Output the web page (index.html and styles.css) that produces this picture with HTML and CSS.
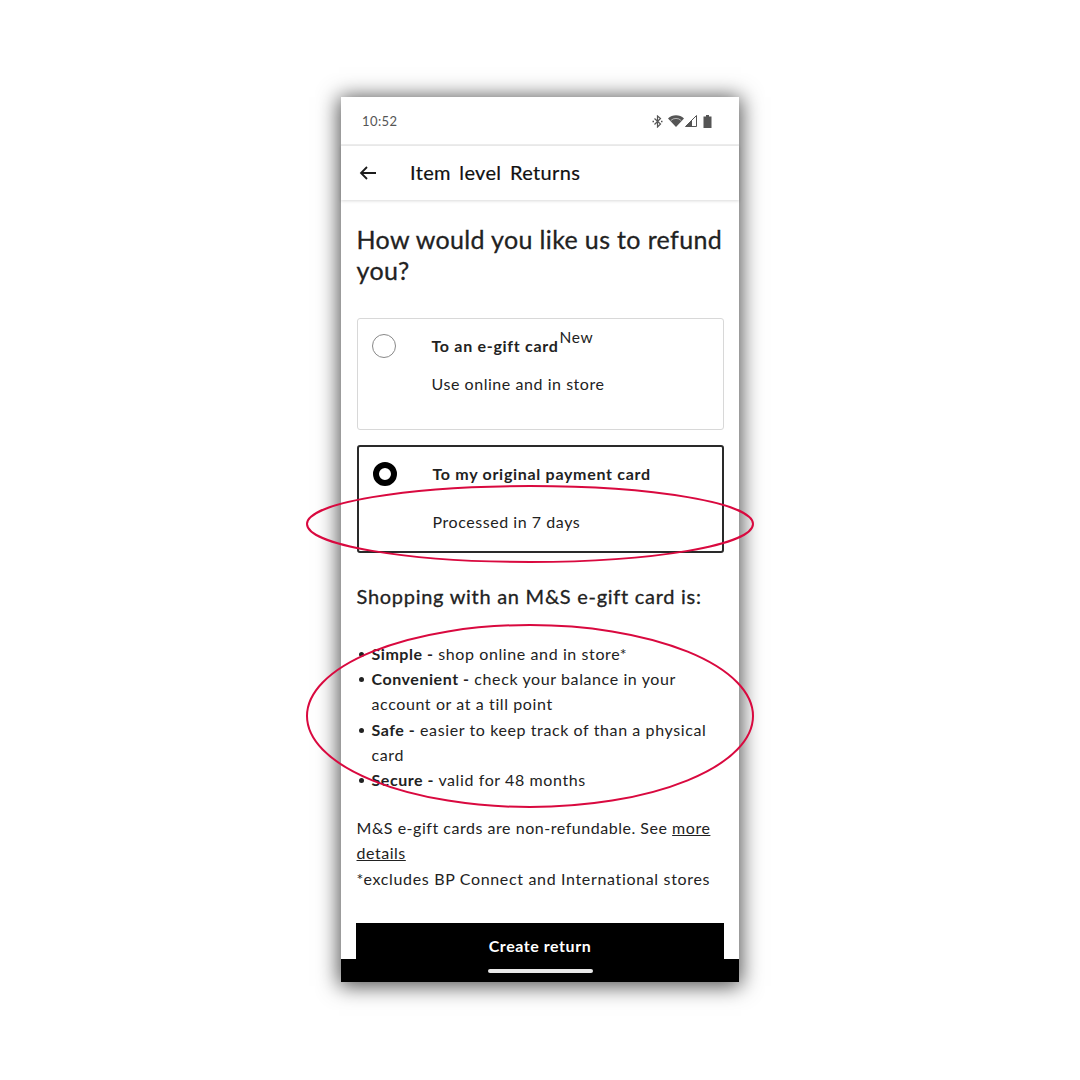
FILE: index.html
```html
<!DOCTYPE html>
<html lang="en">
<head>
    <meta charset="UTF-8">
    <title>Item level Returns</title>
    <link rel="stylesheet" href="styles.css">
</head>
<body>
    <div class="phone">
        <div class="status-bar">
            <span class="time">10:52</span>
            <div class="status-icons">
                <svg width="11" height="13" viewBox="0 0 11 13" fill="none" stroke="#555" stroke-width="1.2"><path d="M2.500 3.500l6 5.500-3 3V1l3 2.500-6 6"/><path d="M.5 6.500h1.500M9 6.500h1.500" stroke-width="1.500"/></svg>
                <svg class="wifi" width="16" height="12" viewBox="0 0 16 12"><path d="M0 3.500a11.500 11.500 0 0 1 16 0L8 12z" fill="#555"/><path d="M2.800 5.500a7.500 7.500 0 0 1 10.400 0" fill="none" stroke="#ddd" stroke-width=".7"/></svg>
                <svg width="12" height="12" viewBox="0 0 12 12"><path d="M11.500.5v11H.5z" fill="none" stroke="#555"/><path d="M7 5v6.500H.5z" fill="#555"/></svg>
                <svg class="battery" width="9" height="13" viewBox="0 0 9 13"><path d="M3 0h3v1.500h2.500V13H.5V1.500H3z" fill="#555"/></svg>
            </div>
        </div>
        <div class="toolbar">
            <svg class="back" width="18" height="14" viewBox="0 0 18 14" fill="none" stroke="#1c1c1c" stroke-width="1.8"><path d="M17 7H2M8 1L2 7l6 6"/></svg>
            <span class="toolbar-title">Item level Returns</span>
        </div>
        <div class="content">
            <h1>How would you like us to refund you?</h1>

            <div class="option option-gift">
                <span class="radio"></span>
                <div class="option-text">
                    <div class="option-title">To an e-gift card<sup>New</sup></div>
                    <div class="option-sub">Use online and in store</div>
                </div>
            </div>
            <div class="option option-card">
                <span class="radio radio-on"></span>
                <div class="option-text">
                    <div class="option-title">To my original payment card</div>
                    <div class="option-sub">Processed in 7 days</div>
                </div>
            </div>

            <h2>Shopping with an M&amp;S e-gift card is:</h2>
            <ul>
                <li><strong>Simple -</strong> shop online and in store*</li>
                <li><strong>Convenient -</strong> check your balance in your account or at a till point</li>
                <li><strong>Safe -</strong> easier to keep track of than a physical card</li>
                <li><strong>Secure -</strong> valid for 48 months</li>
            </ul>
            <p class="note">M&amp;S e-gift cards are non-refundable. See <u>more details</u><br><span class="excludes">*excludes BP Connect and International stores</span></p>
        </div>
        <div class="button">Create return</div>
        <div class="nav-bar"><span class="home-pill"></span></div>
    </div>
    <svg class="ring ring-top" width="450" height="80" viewBox="0 0 450 80"><ellipse cx="225" cy="40" rx="223" ry="38"/></svg>
    <svg class="ring ring-list" width="450" height="186" viewBox="0 0 450 186"><ellipse cx="225" cy="93" rx="223" ry="91"/></svg>
</body>
</html>
```

FILE: styles.css
```css
body {
    margin: 0;
    height: 1080px;
    overflow: hidden;
    background-color: #fff;
    font-family: 'Lato', 'Liberation Sans', sans-serif;
    color: #222;
}
.phone {
    width: 398px;
    height: 885px;
    margin: 97px 0 0 341px;
    background: white;
    box-shadow: 0 2px 20px 2px rgba(0,0,0,0.7);
    display: flex;
    flex-direction: column;
}
.status-bar {
    height: 49px;
    flex: none;
    display: flex;
    align-items: center;
    justify-content: space-between;
    padding: 1px 27px 0 21px;
    border-bottom: 2px solid #eee;
    box-sizing: border-box;
}
.time {
    font-size: 13px;
    letter-spacing: 0.4px;
    color: #555;
}
.status-icons {
    display: flex;
    align-items: center;
    gap: 3px;
}
.wifi {
    margin: 0 -2px 0 2px;
}
.battery {
    margin-left: 3px;
}
.toolbar {
    height: 54px;
    flex: none;
    display: flex;
    align-items: center;
    box-shadow: 0 1px 3px rgba(0,0,0,0.15);
}
.back {
    margin-left: 18px;
}
.toolbar-title {
    margin: 0 0 2px 33px;
    font-size: 20px;
    letter-spacing: 0.35px;
    word-spacing: 3px;
    color: #111;
    -webkit-text-stroke: 0.2px #111;
}
.content {
    flex: 1;
    padding: 24px 15px 0 15.5px;
}
h1 {
    margin: 0 0 32px;
    font-size: 25px;
    line-height: 31px;
    font-weight: 400;
    letter-spacing: 0.36px;
    -webkit-text-stroke: 0.3px #222;
}
.option {
    display: flex;
    box-sizing: border-box;
    border-radius: 3px;
}
.option-gift {
    height: 112px;
    border: 1px solid #d8d8d8;
    padding: 15px 15px 15px 14px;
    margin-bottom: 15px;
}
.option-card {
    height: 108px;
    border: 2px solid #2a2a2a;
    padding: 15px 15px 15px 14px;
}
.radio {
    width: 24px;
    height: 24px;
    flex: none;
    box-sizing: border-box;
    border: 1px solid #888;
    border-radius: 50%;
}
.radio-on {
    border: 6px solid #000;
}
.option-text {
    margin-left: 36px;
}
.option-title {
    font-size: 16px;
    line-height: 24px;
    font-weight: 700;
    letter-spacing: 0.7px;
}
.option-title sup {
    font-size: 15.5px;
    font-weight: 400;
    line-height: 0;
    margin-left: 1px;
    vertical-align: 9px;
}
.option-sub {
    margin-top: 14px;
    font-size: 16px;
    line-height: 24px;
    letter-spacing: 0.55px;
}
.option-card .option-sub {
    margin-top: 24px;
}
h2 {
    margin: 31px 0 0;
    font-size: 20px;
    line-height: 24px;
    font-weight: 400;
    letter-spacing: 0.72px;
    -webkit-text-stroke: 0.3px #222;
}
ul {
    margin: 33px 0 0;
    padding: 0 0 0 15px;
    list-style: none;
    font-size: 16px;
    line-height: 25.2px;
    letter-spacing: 0.6px;
}
li {
    position: relative;
}
li::before {
    content: "";
    position: absolute;
    left: -13px;
    top: 11px;
    width: 5px;
    height: 5px;
    border-radius: 50%;
    background: #222;
}
strong {
    font-weight: 700;
    letter-spacing: 0.55px;
}
.note {
    margin: 23px 0 0;
    font-size: 16px;
    line-height: 25.2px;
    letter-spacing: 0.53px;
}
.excludes {
    letter-spacing: 0.66px;
}
.button {
    position: absolute;
    left: 356px;
    top: 923px;
    width: 368px;
    height: 48px;
    background: #000;
    color: #fff;
    font-size: 16px;
    font-weight: 700;
    letter-spacing: 0.55px;
    text-align: center;
    line-height: 46px;
}
.nav-bar {
    height: 23px;
    flex: none;
    background: #000;
    position: relative;
    z-index: 1;
    display: flex;
    justify-content: center;
    padding-top: 10px;
    box-sizing: border-box;
}
.home-pill {
    width: 105px;
    height: 4px;
    border-radius: 2px;
    background: #e8e8e8;
}
.ring {
    position: absolute;
    fill: none;
    stroke: #d9093f;
    stroke-width: 2;
}
.ring-top {
    left: 305px;
    top: 484px;
}
.ring-list {
    left: 305px;
    top: 623px;
}
```
